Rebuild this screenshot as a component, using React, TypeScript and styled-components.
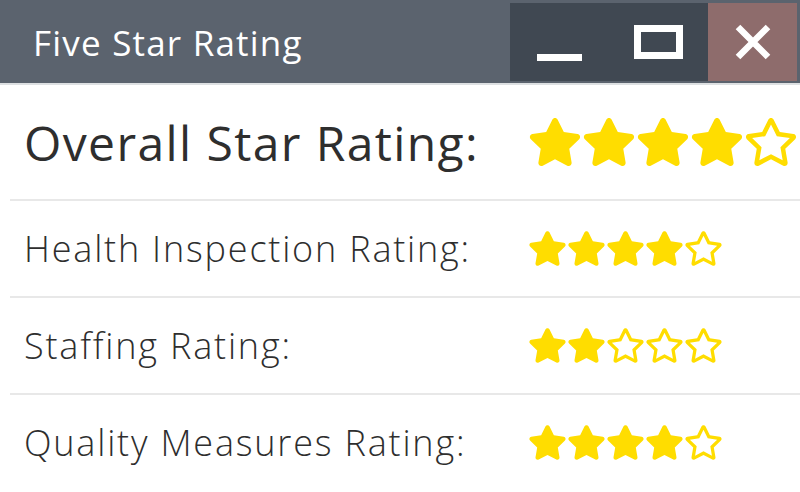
import styled, { createGlobalStyle } from "styled-components";
import { FaStar, FaRegStar } from "react-icons/fa";

const GlobalStyle = createGlobalStyle`
    html, body {
        margin: 0;
        padding: 0;
        background: #ffffff;
        overflow: hidden;
        font-family: "Open Sans", "Liberation Sans", sans-serif;
    }
`;

const Window = styled.div`
    width: 800px;
    height: 492px;
    overflow: hidden;
    background: #ffffff;
`;

const TitleBar = styled.div`
    height: 85px;
    box-sizing: border-box;
    display: flex;
    align-items: stretch;
    justify-content: space-between;
    background-color: #5b636e;
    border-bottom: 2px solid #dde0e2;
    padding: 3px 3px 2px 0;
`;

const Title = styled.h1`
    margin: 0;
    padding-left: 33px;
    align-self: center;
    font-size: 35px;
    font-weight: 400;
    color: #ffffff;
    letter-spacing: 1.2px;
`;

const Controls = styled.div`
    display: flex;
    background-color: #404852;
`;

const ControlButton = styled.div<{ $close?: boolean }>`
    width: ${(props) => (props.$close ? "89px" : "99px")};
    display: flex;
    align-items: center;
    justify-content: center;
    background-color: ${(props) => (props.$close ? "#8e6c6c" : "transparent")};
`;

const MinBar = styled.div`
    width: 45px;
    height: 7px;
    margin-top: 30px;
    background: #ffffff;
`;

const MaxBox = styled.div`
    width: 35px;
    height: 20px;
    border: 7px solid #ffffff;
`;

const Content = styled.div`
    margin-left: 10px;
`;

const Row = styled.div<{ $big?: boolean }>`
    display: grid;
    grid-template-columns: 504px max-content;
    align-items: center;
    height: ${(props) => (props.$big ? "114px" : "95px")};
    padding-left: 14px;
    border-bottom: 2px solid #e8e8e8;
    &:last-child {
        border-bottom: none;
    }
`;

const Label = styled.div<{ $big?: boolean }>`
    font-size: ${(props) => (props.$big ? "48px" : "36px")};
    font-weight: ${(props) => (props.$big ? 500 : 300)};
    color: #2e2e2e;
    white-space: nowrap;
    letter-spacing: ${(props) => (props.$big ? "1.4px" : "1.8px")};
`;

const Stars = styled.div`
    display: flex;
    align-items: center;
    color: #ffdd00;
    white-space: nowrap;
`;

const Count = styled.span`
    font-size: 44px;
    color: #a08c7a;
    margin-left: 4px;
`;

function StarRow({ value, size }: { value: number; size: number }) {
    return (
        <>
            {[1, 2, 3, 4, 5].map((n) =>
                n <= value ? <FaStar key={n} size={size} /> : <FaRegStar key={n} size={size} />
            )}
        </>
    );
}

const ratings = [
    { label: "Health Inspection Rating:", value: 4 },
    { label: "Staffing Rating:", value: 2 },
    { label: "Quality Measures Rating:", value: 4 },
];

export default function App() {
    return (
        <Window>
            <GlobalStyle />
            <TitleBar>
                <Title>Five Star Rating</Title>
                <Controls>
                    <ControlButton>
                        <MinBar />
                    </ControlButton>
                    <ControlButton>
                        <MaxBox />
                    </ControlButton>
                    <ControlButton $close>
                        <svg width="36" height="36" viewBox="0 0 36 36">
                            <path d="M3 3 L33 33 M33 3 L3 33" stroke="#ffffff" strokeWidth="6.5" />
                        </svg>
                    </ControlButton>
                </Controls>
            </TitleBar>
            <Content>
                <Row $big>
                    <Label $big>Overall Star Rating:</Label>
                    <Stars>
                        <StarRow value={4} size={54} />
                        <Count>(4)</Count>
                    </Stars>
                </Row>
                {ratings.map((r) => (
                    <Row key={r.label}>
                        <Label>{r.label}</Label>
                        <Stars>
                            <StarRow value={r.value} size={39} />
                        </Stars>
                    </Row>
                ))}
            </Content>
        </Window>
    );
}
